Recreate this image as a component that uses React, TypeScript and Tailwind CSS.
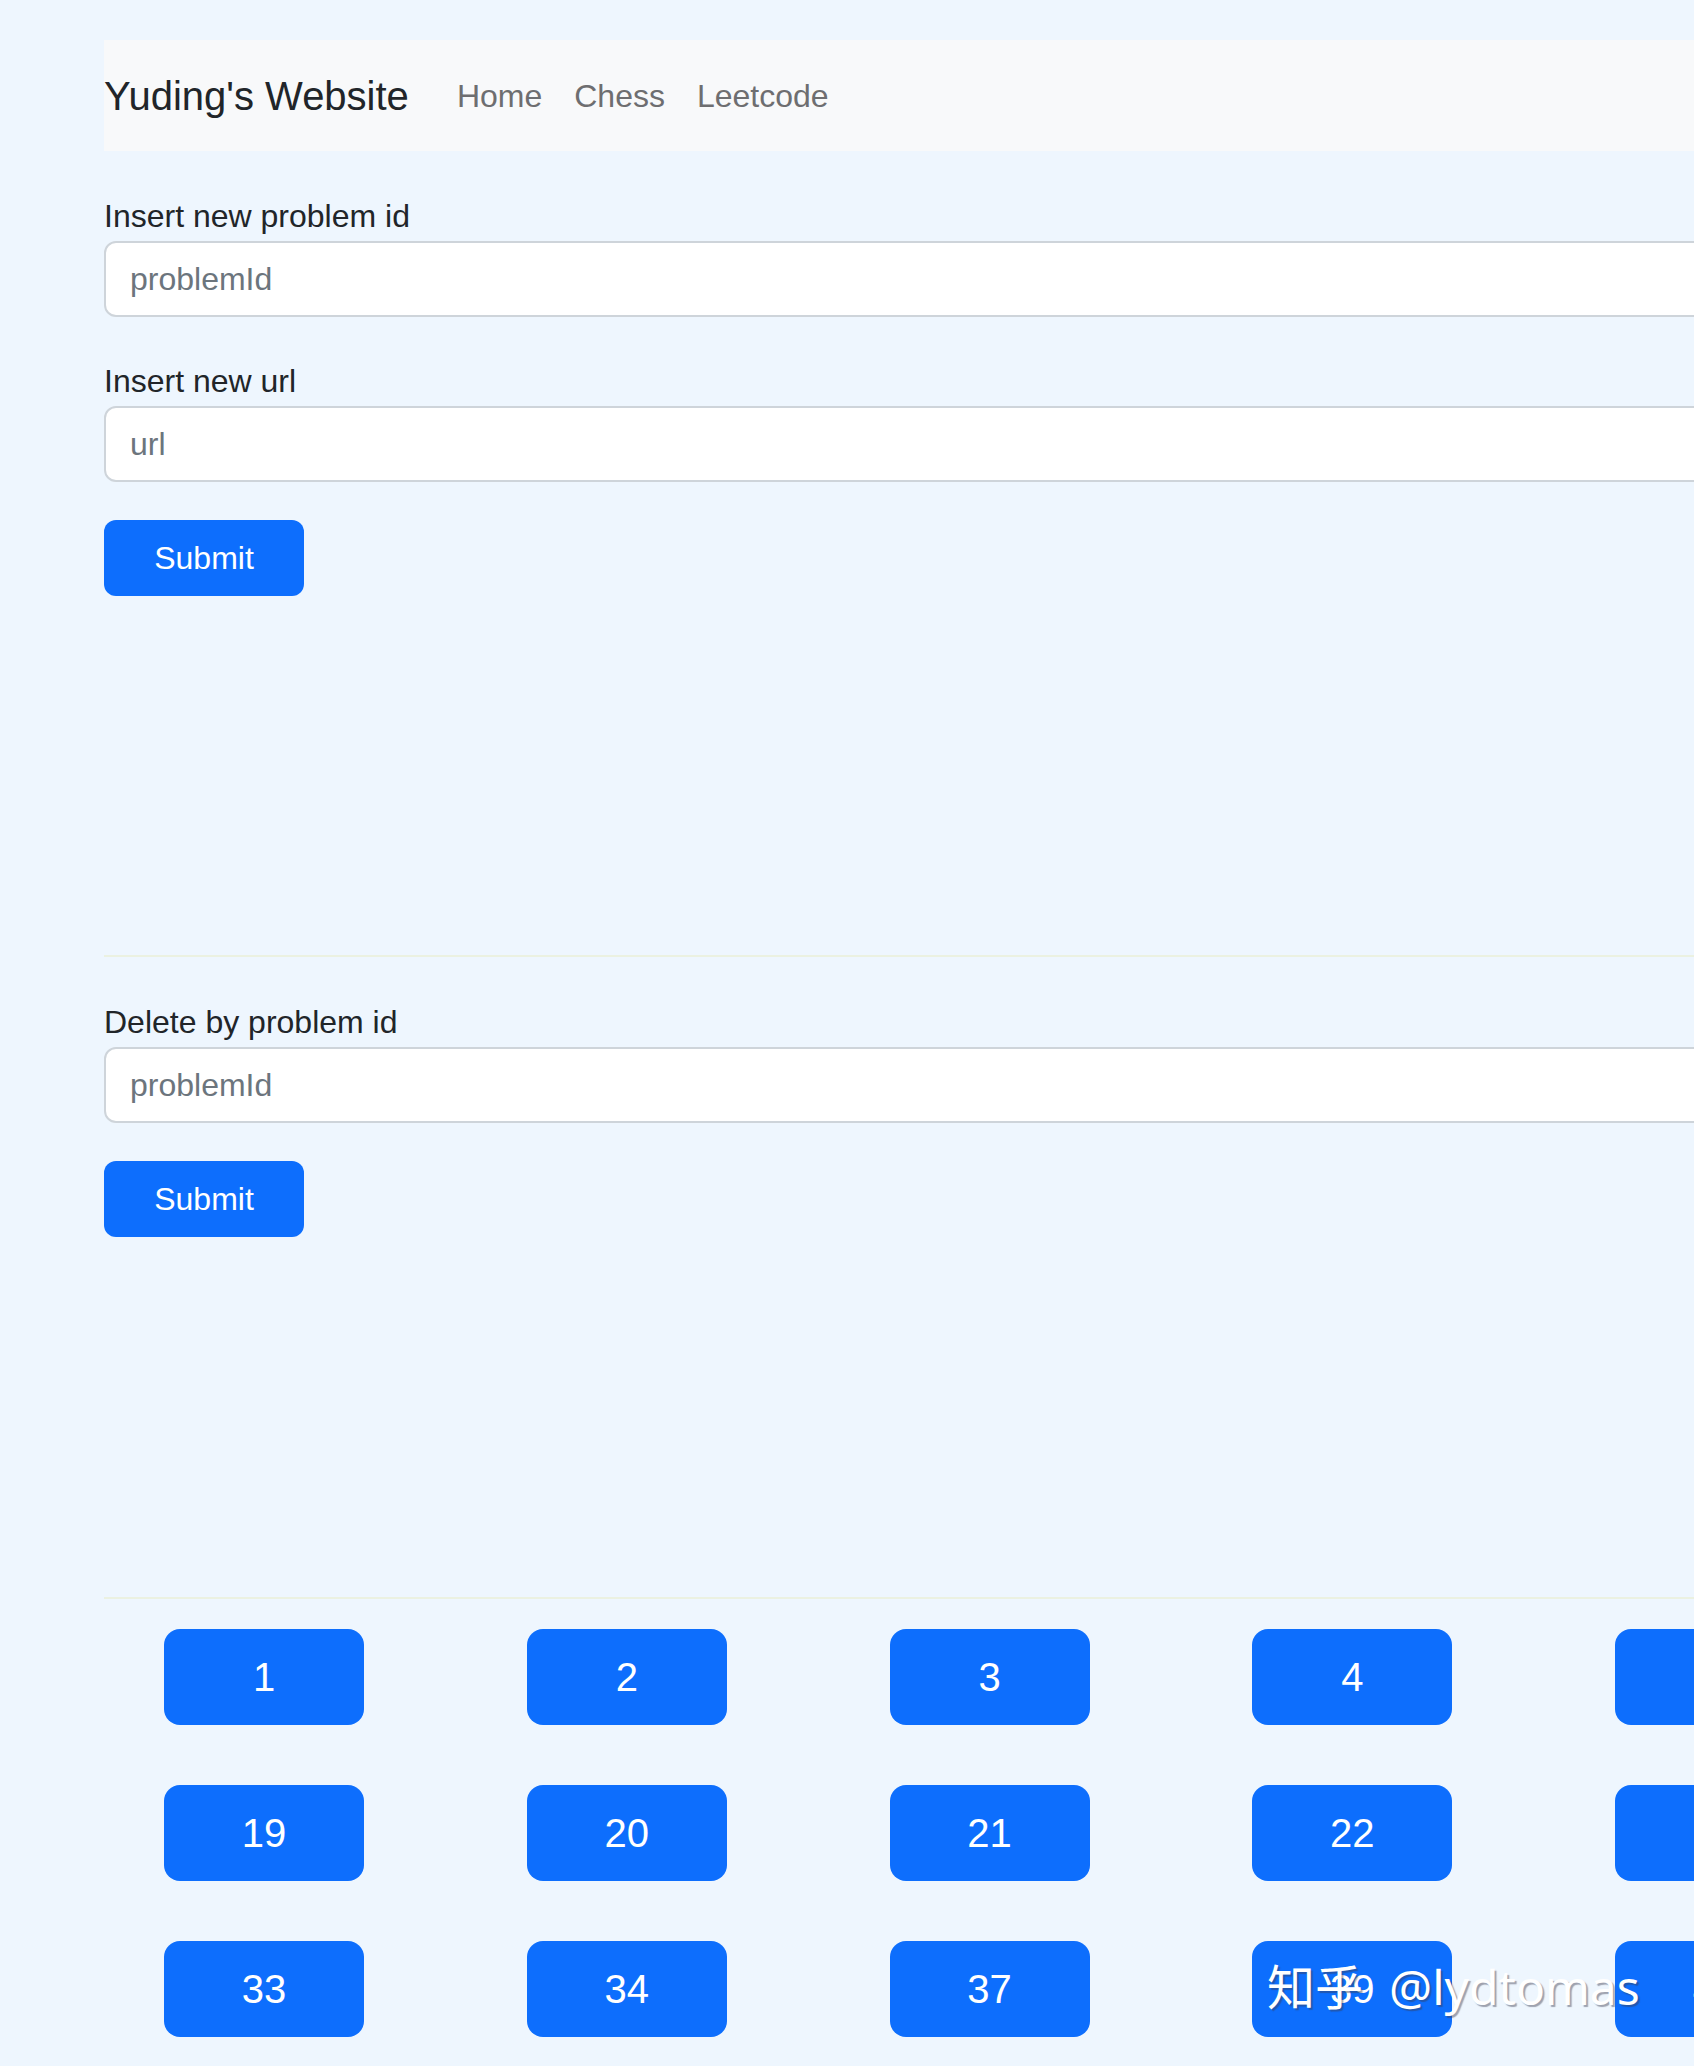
import React from "react";

const rows = [
  ["1", "2", "3", "4", "5"],
  ["19", "20", "21", "22", "23"],
  ["33", "34", "37", "39", "42"],
];

function Field({ label, placeholder }: { label: string; placeholder: string }) {
  return (
    <div>
      <label className="block text-[32px] leading-[48px] text-[#212529]">{label}</label>
      <input
        placeholder={placeholder}
        className="mt-[1px] block h-[76px] w-full rounded-[12px] border-2 border-[#ced4da] bg-white px-[24px] text-[32px] text-[#212529] outline-none placeholder:text-[#6c757d]"
      />
    </div>
  );
}

function SubmitButton() {
  return (
    <button className="mt-[38px] flex h-[76px] w-[200px] items-center justify-center rounded-[12px] bg-[#0d6efd] text-[32px] text-white">
      Submit
    </button>
  );
}

export default function App() {
  return (
    <div className="relative h-[2066px] w-full overflow-hidden bg-[#eef6fe] font-['Liberation_Sans',Arial,sans-serif]">
      <div className="w-[1900px] pl-[104px] pt-[40px]">
        {/* Navbar */}
        <nav className="flex h-[111px] items-center bg-[#f8f9fa]">
          <span className="mr-[32px] whitespace-nowrap text-[40px] text-[#212529]">
            Yuding's Website
          </span>
          <a className="px-[16px] text-[32px] text-[#6e6e70]">Home</a>
          <a className="px-[16px] text-[32px] text-[#6e6e70]">Chess</a>
          <a className="px-[16px] text-[32px] text-[#6e6e70]">Leetcode</a>
        </nav>

        {/* Insert form */}
        <div className="mt-[41px]">
          <Field label="Insert new problem id" placeholder="problemId" />
          <div className="mt-[40px]">
            <Field label="Insert new url" placeholder="url" />
          </div>
          <SubmitButton />
        </div>

        <hr className="mt-[359px] h-0 border-0 border-t-2 border-[#ebf1e1]" />

        {/* Delete form */}
        <div className="mt-[41px]">
          <Field label="Delete by problem id" placeholder="problemId" />
          <SubmitButton />
        </div>

        <hr className="mt-[360px] h-0 border-0 border-t-2 border-[#ebf1e1]" />

        {/* Problem buttons */}
        <div className="mt-[30px] grid grid-cols-[repeat(5,362.75px)] gap-y-[60px]">
          {rows.flat().map((n, i) => (
            <div key={i} className="pl-[60px]">
              <button className="flex h-[96px] w-[200px] items-center justify-center rounded-[16px] bg-[#0d6efd] text-[40px] text-white">
                {n}
              </button>
            </div>
          ))}
        </div>
      </div>

      {/* Watermark */}
      <div className="absolute left-[1267px] top-[1957px] flex whitespace-nowrap font-['Noto_Sans','Noto_Sans_CJK_SC',sans-serif] text-[48px] leading-[60px] text-white [text-shadow:2px_2px_1px_rgba(60,60,80,0.45)]">
        <span>知乎</span>
        <span className="ml-[26px]">@lydtomas</span>
      </div>
    </div>
  );
}
